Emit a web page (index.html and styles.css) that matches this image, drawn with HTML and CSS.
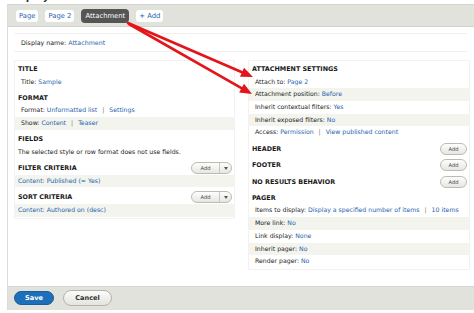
FILE: index.html
```html
<!DOCTYPE html>
<html>
<head>
<meta charset="utf-8">
<link rel="stylesheet" href="styles.css">
</head>
<body>
<h2 class="page-title">Displays</h2>
<div class="display">
  <div class="tabs">
    <a class="tab">Page</a>
    <a class="tab">Page 2</a>
    <a class="tab active">Attachment</a>
    <a class="tab add-tab">+ Add</a>
  </div>
  <div class="display-name">Display name: <a>Attachment</a></div>
  <div class="columns">
    <div class="col">
      <div class="section">
        <div class="sec-head">Title</div>
        <div class="row">Title: <a>Sample</a></div>
      </div>
      <div class="section">
        <div class="sec-head">Format</div>
        <div class="row">Format: <a>Unformatted list</a><span class="sep">|</span><a>Settings</a></div>
        <div class="row alt">Show: <a>Content</a><span class="sep">|</span><a>Teaser</a></div>
      </div>
      <div class="section">
        <div class="sec-head">Fields</div>
        <div class="row flush">The selected style or row format does not use fields.</div>
      </div>
      <div class="section">
        <div class="sec-head btn">Filter criteria<span class="add split"><span class="lbl">Add</span><span class="drop"></span></span></div>
        <div class="row alt flush"><a>Content: Published (= Yes)</a></div>
      </div>
      <div class="section">
        <div class="sec-head btn">Sort criteria<span class="add split"><span class="lbl">Add</span><span class="drop"></span></span></div>
        <div class="row alt flush"><a>Content: Authored on (desc)</a></div>
      </div>
    </div>
    <div class="col">
      <div class="section">
        <div class="sec-head">Attachment settings</div>
        <div class="row">Attach to: <a>Page 2</a></div>
        <div class="row alt">Attachment position: <a>Before</a></div>
        <div class="row">Inherit contextual filters: <a>Yes</a></div>
        <div class="row alt">Inherit exposed filters: <a>No</a></div>
        <div class="row">Access: <a>Permission</a><span class="sep">|</span><a>View published content</a></div>
      </div>
      <div class="section">
        <div class="sec-head btn">Header<span class="add"><span class="lbl">Add</span></span></div>
      </div>
      <div class="section">
        <div class="sec-head btn">Footer<span class="add"><span class="lbl">Add</span></span></div>
      </div>
      <div class="section">
        <div class="sec-head btn">No results behavior<span class="add"><span class="lbl">Add</span></span></div>
      </div>
      <div class="section">
        <div class="sec-head">Pager</div>
        <div class="row">Items to display: <a>Display a specified number of items</a><span class="sep">|</span><a>10 items</a></div>
        <div class="row alt">More link: <a>No</a></div>
        <div class="row">Link display: <a>None</a></div>
        <div class="row alt">Inherit pager: <a>No</a></div>
        <div class="row">Render pager: <a>No</a></div>
      </div>
    </div>
  </div>
  <div class="actions">
    <span class="btn-save">Save</span>
    <span class="btn-cancel">Cancel</span>
  </div>
</div>
<svg class="arrows" width="474" height="313" viewBox="0 0 474 313">
  <line x1="128" y1="23" x2="242" y2="72.3" stroke="#e3151b" stroke-width="2.6" stroke-linecap="round"/>
  <polygon points="253,77 240,76.8 244,67.7" fill="#e3151b"/>
  <line x1="129" y1="24" x2="241.5" y2="88.1" stroke="#e3151b" stroke-width="2.6" stroke-linecap="round"/>
  <polygon points="252,94 239.1,92.5 244,83.7" fill="#e3151b"/>
</svg>
</body>
</html>
```

FILE: styles.css
```css
* { box-sizing: border-box; }

body {
  margin: 0;
  font-family: "DejaVu Sans", "Liberation Sans", sans-serif;
  color: #222;
  background: #fff;
  width: 474px;
  height: 313px;
  overflow: hidden;
  position: relative;
}

a { color: #1f63ad; text-decoration: none; }

.page-title {
  margin: -9px 0 0 8px;
  font-size: 10px;
  line-height: 12px;
  height: 13px;
  font-weight: bold;
  color: #333;
}

.display {
  margin-left: 7px;
  border-left: 1px solid #dcdcd6;
}

.tabs {
  height: 23px;
  background: #e1e2dc;
  border-top: 1px solid #d6d6d0;
  border-bottom: 1px solid #d3d3cd;
  display: flex;
  align-items: center;
  padding-left: 8px;
  gap: 7px;
}

.tab {
  font-size: 6.8px;
  height: 12px;
  line-height: 12px;
  padding: 0 3px;
  background: #fff;
  border-radius: 3px;
  color: #1f63ad;
}

.tab.active {
  background: #555;
  color: #fff;
  height: 14px;
  line-height: 14px;
  border-radius: 4px;
  padding: 0 4px;
}

.display-name {
  margin: 6px 7px 0 6px;
  height: 19px;
  line-height: 17px;
  border-top: 1px solid #f0f0ee;
  border-bottom: 1px solid #f0f0ee;
  padding-left: 7px;
  font-size: 6.3px;
  color: #222;
}

.columns {
  display: grid;
  grid-template-columns: 221px 222px;
  column-gap: 13px;
  margin: 8px 0 0 6px;
  align-items: start;
}

.col {
  border: 1px solid #f2f2f0;
  padding: 1.5px 0 1px;
}

.section + .section { margin-top: 3px; }

.sec-head {
  height: 13px;
  display: flex;
  align-items: center;
  justify-content: space-between;
  padding: 0 2px 0 3px;
  font-size: 6.4px;
  font-weight: bold;
  color: #1a1a1a;
  text-transform: uppercase;
}

.sec-head.btn { height: 13.5px; }

.row {
  height: 12.7px;
  line-height: 12.7px;
  padding-left: 6px;
  font-size: 6.2px;
  white-space: nowrap;
  color: #222;
}

.row.alt { background: #f3f4ee; }
.row.flush { padding-left: 3px; }

.sep { color: #777; margin: 0 5px; }

.add {
  display: flex;
  align-items: center;
  height: 12px;
  border: 1px solid #bcbcb4;
  border-radius: 6px;
  background: linear-gradient(#fdfdfd, #e6e6e2);
  font-size: 5.2px;
  font-weight: normal;
  text-transform: none;
  color: #444;
}

.add .lbl {
  width: 25px;
  text-align: center;
}

.add.split .lbl { width: 27px; }

.add .drop {
  width: 12px;
  height: 100%;
  border-left: 1px solid #c8c8c0;
  display: flex;
  align-items: center;
  justify-content: center;
}

.add .drop::after {
  content: "";
  border-left: 2.5px solid transparent;
  border-right: 2.5px solid transparent;
  border-top: 3px solid #555;
}

.actions {
  margin-top: 16px;
  height: 24px;
  background: #e1e2dc;
  border-top: 1px solid #d6d6d0;
  display: flex;
  align-items: center;
  gap: 9px;
  padding-left: 6px;
}

.btn-save {
  width: 40px;
  height: 14px;
  line-height: 12px;
  text-align: center;
  background: #1e6fba;
  border: 1px solid #1a5d9e;
  border-radius: 8px;
  color: #fff;
  font-weight: bold;
  font-size: 6.6px;
}

.btn-cancel {
  width: 49px;
  height: 16px;
  line-height: 14px;
  text-align: center;
  background: linear-gradient(#fbfbfb, #e3e3df);
  border: 1px solid #b4b4ac;
  border-radius: 8px;
  color: #333;
  font-weight: bold;
  font-size: 6.6px;
}

.arrows {
  position: absolute;
  top: 0;
  left: 0;
  pointer-events: none;
}
```
